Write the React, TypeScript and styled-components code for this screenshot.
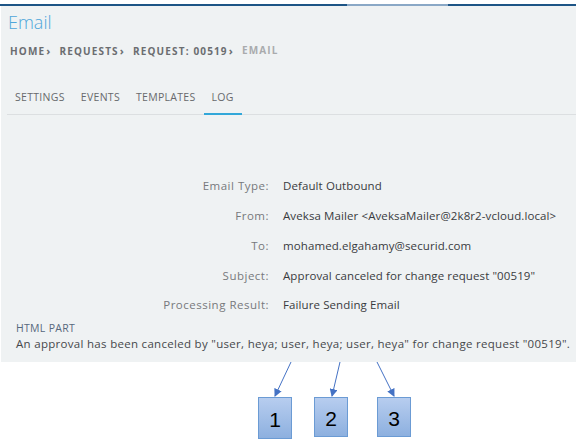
import { createGlobalStyle } from "styled-components";
import styled from "styled-components";

const GlobalStyle = createGlobalStyle`
  html, body {
    margin: 0;
    padding: 0;
    background: #ffffff;
  }
  body {
    font-family: "Open Sans", "Noto Sans", "Liberation Sans", sans-serif;
  }
`;

const crumbs = ["HOME", "REQUESTS", "REQUEST: 00519"];
const tabs = ["SETTINGS", "EVENTS", "TEMPLATES", "LOG"];

const details: [string, string][] = [
  ["Email Type:", "Default Outbound"],
  ["From:", "Aveksa Mailer <AveksaMailer@2k8r2-vcloud.local>"],
  ["To:", "mohamed.elgahamy@securid.com"],
  ["Subject:", 'Approval canceled for change request "00519"'],
  ["Processing Result:", "Failure Sending Email"],
];

// callout boxes below the panel: left offset from previous item
const callouts = [
  { label: "1", gap: 258, height: 42 },
  { label: "2", gap: 22, height: 40 },
  { label: "3", gap: 29, height: 40 },
];

const arrows = [
  { x1: 291, y1: 0, x2: 275, y2: 34 },
  { x1: 340, y1: 0, x2: 332, y2: 34 },
  { x1: 377, y1: 0, x2: 394, y2: 34 },
];

const App = () => {
  return (
    <Page>
      <GlobalStyle />
      <TopRule />
      <Panel>
        <Title>Email</Title>
        <Breadcrumb>
          {crumbs.map((c) => (
            <Crumb key={c}>
              {c}
              <Chevron>›</Chevron>
            </Crumb>
          ))}
          <Crumb $current>EMAIL</Crumb>
        </Breadcrumb>

        <TabBar>
          {tabs.map((t) => (
            <Tab key={t} $active={t === "LOG"}>
              {t}
            </Tab>
          ))}
        </TabBar>

        <DetailGrid>
          {details.map(([label, value]) => (
            <Row key={label}>
              <Label>{label}</Label>
              <Value>{value}</Value>
            </Row>
          ))}
        </DetailGrid>

        <HtmlPart>
          <PartTitle>HTML PART</PartTitle>
          <PartBody>
            An approval has been canceled by "user, heya; user, heya; user,
            heya" for change request "00519".
          </PartBody>
        </HtmlPart>
      </Panel>

      <Annotations>
        <ArrowLayer width="587" height="36" viewBox="0 0 587 36">
          <defs>
            <marker
              id="head"
              markerWidth="8"
              markerHeight="8"
              refX="7"
              refY="4"
              orient="auto"
              markerUnits="userSpaceOnUse"
            >
              <path d="M0,0 L8,4 L0,8 z" fill="#4472c4" />
            </marker>
          </defs>
          {arrows.map((a, i) => (
            <line
              key={i}
              x1={a.x1}
              y1={a.y1}
              x2={a.x2}
              y2={a.y2}
              stroke="#4472c4"
              strokeWidth="1"
              markerEnd="url(#head)"
            />
          ))}
        </ArrowLayer>
        <CalloutRow>
          {callouts.map((c) => (
            <Callout key={c.label} $gap={c.gap} $h={c.height}>
              {c.label}
            </Callout>
          ))}
        </CalloutRow>
      </Annotations>
    </Page>
  );
};

export default App;

const Page = styled.div`
  width: 587px;
  height: 439px;
  overflow: hidden;
  background: #ffffff;
`;

const TopRule = styled.div`
  margin-top: 4px;
  width: 576px;
  height: 2px;
  background: linear-gradient(
    to right,
    #1d5586 0,
    #1d5586 347px,
    #8aa8c6 347px,
    #8aa8c6 448px,
    #1d5586 448px
  );
`;

const Panel = styled.div`
  margin-left: 1px;
  width: 575px;
  height: 356px;
  box-sizing: border-box;
  background: #eff2f3;
  padding-top: 4px;
`;

const Title = styled.div`
  margin-left: 7px;
  font-size: 18px;
  line-height: 24px;
  font-weight: 300;
  color: #4ea6da;
`;

const Breadcrumb = styled.div`
  display: flex;
  align-items: center;
  margin: 7px 0 0 9px;
  height: 18px;
`;

const Crumb = styled.span<{ $current?: boolean }>`
  font-size: 10px;
  font-weight: 700;
  letter-spacing: 1.15px;
  color: ${(p) => (p.$current ? "#a9abad" : "#6b6d70")};
`;

const Chevron = styled.span`
  display: inline-block;
  margin: 0 8px 0 1px;
  font-size: 11px;
  font-weight: 700;
`;

const TabBar = styled.div`
  display: flex;
  margin: 31px 0 0 6px;
  border-bottom: 1px solid #dcdfe1;
`;

const Tab = styled.div<{ $active?: boolean }>`
  padding: 0 8px 9px;
  font-size: 10.5px;
  line-height: 14px;
  letter-spacing: 0.3px;
  color: #67696c;
  border-bottom: 2px solid ${(p) => (p.$active ? "#32a7d9" : "transparent")};
  margin-bottom: -1px;
`;

const DetailGrid = styled.div`
  display: flex;
  flex-direction: column;
  margin-top: 56px;
`;

const Row = styled.div`
  display: grid;
  grid-template-columns: 268px auto;
  column-gap: 14px;
  height: 29.75px;
  align-items: center;
  font-size: 11.5px;
`;

const Label = styled.span`
  text-align: right;
  color: #77797c;
  letter-spacing: 0.5px;
`;

const Value = styled.span`
  color: #393b3e;
  letter-spacing: 0.1px;
`;

const HtmlPart = styled.div`
  margin: 1px 0 0 15px;
`;

const PartTitle = styled.div`
  font-size: 10.5px;
  line-height: 15px;
  letter-spacing: 0.3px;
  color: #56687c;
`;

const PartBody = styled.div`
  font-size: 11.5px;
  line-height: 16px;
  letter-spacing: 0.3px;
  color: #46484b;
  white-space: nowrap;
`;

const Annotations = styled.div`
  position: relative;
  height: 77px;
`;

const ArrowLayer = styled.svg`
  position: absolute;
  left: 0;
  top: 0;
`;

const CalloutRow = styled.div`
  display: flex;
  align-items: flex-start;
  padding-top: 35px;
`;

const Callout = styled.div<{ $gap: number; $h: number }>`
  margin-left: ${(p) => p.$gap}px;
  width: 34px;
  height: ${(p) => p.$h}px;
  box-sizing: border-box;
  padding-top: 3px;
  border: 1px solid #6b9bd4;
  background: linear-gradient(to bottom, #b7cdef, #8db0df);
  display: flex;
  align-items: center;
  justify-content: center;
  font-family: "Liberation Sans", "DejaVu Sans", sans-serif;
  font-size: 21px;
  color: #000000;
`;
